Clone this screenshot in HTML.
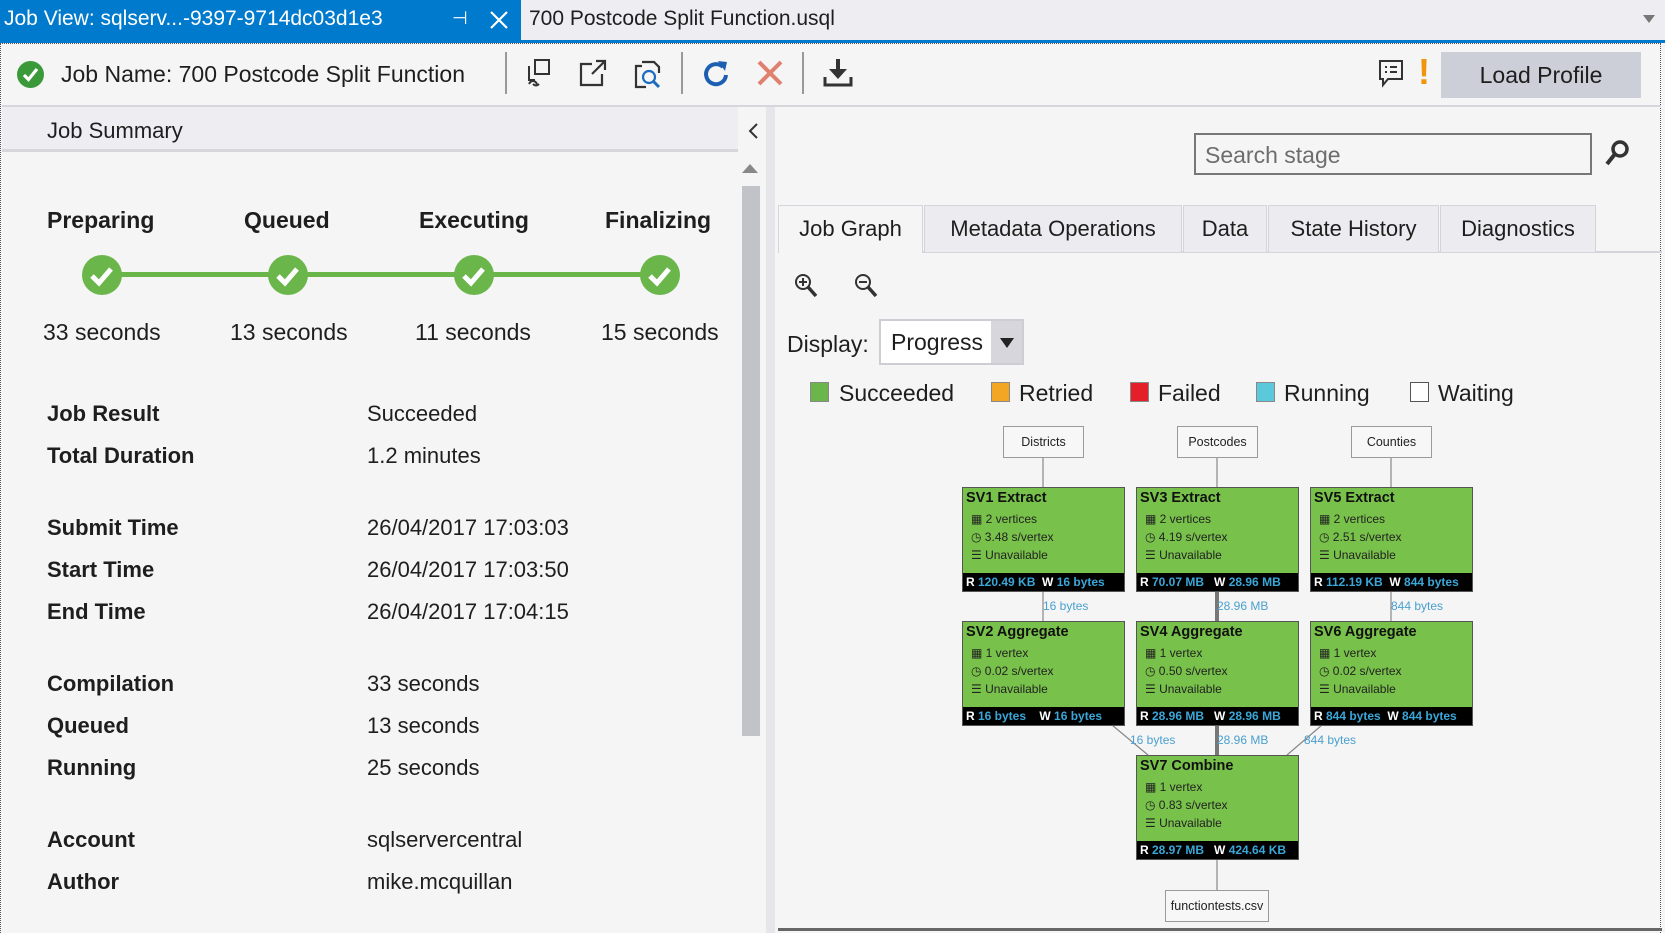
<!DOCTYPE html>
<html><head><meta charset="utf-8">
<style>
*{margin:0;padding:0;box-sizing:border-box}
body{width:1665px;height:933px;overflow:hidden;background:#f5f5f5;font-family:"Liberation Sans",sans-serif;color:#1e1e1e;position:relative}
.a{position:absolute;white-space:nowrap}
.lbl{font-weight:bold;font-size:22px}
.val{font-size:22px}
.st{position:absolute;width:163px;height:105px;background:#78c14a;border:1px solid #555}
.st .t{position:absolute;left:3px;top:2px;font-weight:bold;font-size:14.5px;color:#111}
.st .l{position:absolute;left:8px;font-size:12px;color:#222}
.st .f{position:absolute;left:0;right:0;bottom:0;height:18px;background:#000;color:#fff;font-size:12px;font-weight:bold;line-height:18px;padding-left:3px}
.st .f b{color:#3aa7d8}
.in{position:absolute;height:32px;border:1px solid #9a9a9a;background:#f7f7f7;font-size:12.5px;text-align:center;line-height:30px;color:#222}
.el{position:absolute;font-size:12px;color:#4aa0cf}
.tab{position:absolute;top:205px;height:47px;background:#ececf0;border:1px solid #d4d4da;border-bottom:none;font-size:22px;line-height:46px;text-align:center}
</style></head><body>
<!-- top tab bar -->
<div class="a" style="left:0;top:0;width:1665px;height:41px;background:#eeeef2"></div>
<div class="a" style="left:0;top:0;width:521px;height:41px;background:#007acc"></div>
<div class="a" style="left:4px;top:7px;font-size:21px;color:#fff">Job View: sqlserv...-9397-9714dc03d1e3</div>
<div class="a" style="left:452px;top:8px;font-size:18px;color:#fff">⊣</div>
<svg class="a" style="left:489px;top:10px" width="20" height="20"><path d="M2 2L18 18M18 2L2 18" stroke="#fff" stroke-width="2.2"/></svg>
<div class="a" style="left:529px;top:7px;font-size:21px;color:#1e1e1e">700 Postcode Split Function.usql</div>
<svg class="a" style="left:1643px;top:15px" width="12" height="8"><path d="M0 0H12L6 8Z" fill="#777"/></svg>
<div class="a" style="left:0;top:40px;width:1665px;height:3px;background:#007acc"></div>
<div class="a" style="left:0;top:43px;width:1661px;height:890px;border:1px dotted #555;border-bottom:none"></div>
<!-- toolbar -->
<svg class="a" style="left:16px;top:60px" width="29" height="29"><circle cx="14.5" cy="14.5" r="13.5" fill="#3a9a3a"/><path d="M8 15l4.5 4.5L21 9" stroke="#fff" stroke-width="3.2" fill="none"/></svg>
<div class="a" style="left:61px;top:61px;font-size:23px">Job Name: 700 Postcode Split Function</div>
<div class="a" style="left:505px;top:52px;width:2px;height:42px;background:#999"></div>
<div class="a" style="left:681px;top:52px;width:2px;height:42px;background:#999"></div>
<div class="a" style="left:802px;top:52px;width:2px;height:42px;background:#999"></div>
<svg class="a" style="left:525px;top:58px" width="30" height="30" fill="none" stroke="#333" stroke-width="2"><rect x="10" y="2" width="14" height="14"/><path d="M4 8v14h6"/><path d="M4 26c2-4 6-4 8 0M8 26c2 2 4 2 6 0"/></svg>
<svg class="a" style="left:578px;top:58px" width="30" height="30" fill="none" stroke="#333" stroke-width="2.2"><path d="M14 6H3v21h21V16"/><path d="M14 16L27 3M18 3h9v9"/></svg>
<svg class="a" style="left:633px;top:58px" width="32" height="32" fill="none" stroke-width="2.2"><path d="M9 8H3v21h10" stroke="#333"/><path d="M9 4h12l5 5v6" stroke="#333"/><circle cx="16" cy="19" r="6" stroke="#1c6bc0"/><path d="M20 23l6 6" stroke="#1c6bc0" stroke-width="3"/></svg>
<svg class="a" style="left:702px;top:58px" width="30" height="30" fill="none"><path d="M21 9a10 10 0 1 0 3 8" stroke="#1c5fb0" stroke-width="4"/><path d="M16 3l9 1-2 9z" fill="#1c5fb0"/></svg>
<svg class="a" style="left:756px;top:59px" width="28" height="28"><path d="M3 3L25 25M25 3L3 25" stroke="#e0806f" stroke-width="4"/></svg>
<svg class="a" style="left:823px;top:57px" width="30" height="30"><path d="M15 2v17" stroke="#333" stroke-width="4"/><path d="M6 12l9 10 9-10z" fill="#333"/><path d="M2 20v8h26v-8" stroke="#333" stroke-width="3" fill="none"/></svg>
<svg class="a" style="left:1376px;top:58px" width="30" height="32" fill="none" stroke="#333" stroke-width="2"><path d="M4 3h22v18H12l-5 6v-6H4z"/><path d="M9 9h2M14 9h7M9 14h2M14 14h7"/></svg>
<div class="a" style="left:1418px;top:51px;font-size:36px;font-weight:bold;color:#f0960a">!</div>
<div class="a" style="left:1441px;top:52px;width:200px;height:46px;background:#ccced8;font-size:23px;text-align:center;line-height:46px">Load Profile</div>
<div class="a" style="left:2px;top:105px;width:1659px;height:2px;background:#d6d6dc"></div>
<!-- left panel -->
<div class="a" style="left:2px;top:107px;width:736px;height:45px;background:#eeeef2;border-bottom:3px solid #d6d6dc"></div>
<div class="a" style="left:47px;top:118px;font-size:22px">Job Summary</div>
<svg class="a" style="left:747px;top:122px" width="12" height="18"><path d="M10 2L3 9l7 7" stroke="#333" stroke-width="2" fill="none"/></svg>
<svg class="a" style="left:742px;top:163px" width="16" height="10"><path d="M0 10L8 1l8 9z" fill="#888"/></svg>
<div class="a" style="left:742px;top:186px;width:18px;height:550px;background:#c2c3c9"></div>
<div class="a" style="left:766px;top:107px;width:9px;height:826px;background:#e6e6ea"></div>
<!-- stages -->
<div class="a" style="left:102px;top:272px;width:557px;height:5px;background:#6ab64a"></div>
<svg class="a" style="left:0;top:0;overflow:visible" width="1" height="1">
<g fill="#6ab64a"><circle cx="102" cy="275" r="20"/><circle cx="288" cy="275" r="20"/><circle cx="474" cy="275" r="20"/><circle cx="660" cy="275" r="20"/></g>
<g stroke="#fff" stroke-width="5" fill="none"><path d="M92 276l7 7 12-14"/><path d="M278 276l7 7 12-14"/><path d="M464 276l7 7 12-14"/><path d="M650 276l7 7 12-14"/></g>
</svg>
<div class="a lbl" style="left:47px;top:207px;font-size:23px">Preparing</div>
<div class="a lbl" style="left:244px;top:207px;font-size:23px">Queued</div>
<div class="a lbl" style="left:419px;top:207px;font-size:23px">Executing</div>
<div class="a lbl" style="left:605px;top:207px;font-size:23px">Finalizing</div>
<div class="a val" style="left:43px;top:319px;font-size:23px">33 seconds</div>
<div class="a val" style="left:230px;top:319px;font-size:23px">13 seconds</div>
<div class="a val" style="left:415px;top:319px;font-size:23px">11 seconds</div>
<div class="a val" style="left:601px;top:319px;font-size:23px">15 seconds</div>
<div class="a lbl" style="left:47px;top:401px">Job Result</div><div class="a val" style="left:367px;top:401px">Succeeded</div>
<div class="a lbl" style="left:47px;top:443px">Total Duration</div><div class="a val" style="left:367px;top:443px">1.2 minutes</div>
<div class="a lbl" style="left:47px;top:515px">Submit Time</div><div class="a val" style="left:367px;top:515px">26/04/2017 17:03:03</div>
<div class="a lbl" style="left:47px;top:557px">Start Time</div><div class="a val" style="left:367px;top:557px">26/04/2017 17:03:50</div>
<div class="a lbl" style="left:47px;top:599px">End Time</div><div class="a val" style="left:367px;top:599px">26/04/2017 17:04:15</div>
<div class="a lbl" style="left:47px;top:671px">Compilation</div><div class="a val" style="left:367px;top:671px">33 seconds</div>
<div class="a lbl" style="left:47px;top:713px">Queued</div><div class="a val" style="left:367px;top:713px">13 seconds</div>
<div class="a lbl" style="left:47px;top:755px">Running</div><div class="a val" style="left:367px;top:755px">25 seconds</div>
<div class="a lbl" style="left:47px;top:827px">Account</div><div class="a val" style="left:367px;top:827px">sqlservercentral</div>
<div class="a lbl" style="left:47px;top:869px">Author</div><div class="a val" style="left:367px;top:869px">mike.mcquillan</div>
<!-- right panel -->
<div class="a" style="left:1194px;top:133px;width:398px;height:42px;border:2px solid #777;background:#f5f5f5"></div>
<div class="a" style="left:1205px;top:142px;font-size:23px;color:#6d6d6d">Search stage</div>
<svg class="a" style="left:1604px;top:139px" width="26" height="28"><circle cx="16" cy="10" r="7" stroke="#333" stroke-width="3.5" fill="none"/><path d="M11 15L3 25" stroke="#333" stroke-width="4"/></svg>
<div class="a" style="left:778px;top:251px;width:884px;height:2px;background:#d4d4da"></div>
<div class="tab" style="left:778px;width:145px;background:#f5f5f5;height:48px">Job Graph</div>
<div class="tab" style="left:924px;width:258px">Metadata Operations</div>
<div class="tab" style="left:1183px;width:84px">Data</div>
<div class="tab" style="left:1268px;width:171px">State History</div>
<div class="tab" style="left:1440px;width:156px">Diagnostics</div>
<svg class="a" style="left:793px;top:272px" width="30" height="30" fill="none" stroke="#333" stroke-width="2"><circle cx="10" cy="10" r="7"/><path d="M10 6v8M6 10h8"/><path d="M15 15l8 9" stroke-width="3.5"/></svg>
<svg class="a" style="left:853px;top:272px" width="30" height="30" fill="none" stroke="#333" stroke-width="2"><circle cx="10" cy="10" r="7"/><path d="M6 10h8"/><path d="M15 15l8 9" stroke-width="3.5"/></svg>
<div class="a" style="left:787px;top:331px;font-size:23px">Display:</div>
<div class="a" style="left:879px;top:319px;width:145px;height:46px;border:2px solid #cdcdd3;background:#fff"></div>
<div class="a" style="left:991px;top:321px;width:31px;height:42px;background:#d6d6dc"></div>
<svg class="a" style="left:1000px;top:338px" width="14" height="10"><path d="M0 0H14L7 10z" fill="#222"/></svg>
<div class="a" style="left:891px;top:329px;font-size:23px">Progress</div>
<div class="a" style="left:810px;top:382px;width:19px;height:20px;background:#6ab64a;border:1px solid #888"></div>
<div class="a" style="left:839px;top:380px;font-size:23px">Succeeded</div>
<div class="a" style="left:991px;top:382px;width:19px;height:20px;background:#f2a623;border:1px solid #888"></div>
<div class="a" style="left:1019px;top:380px;font-size:23px">Retried</div>
<div class="a" style="left:1130px;top:382px;width:19px;height:20px;background:#e3202a;border:1px solid #888"></div>
<div class="a" style="left:1158px;top:380px;font-size:23px">Failed</div>
<div class="a" style="left:1256px;top:382px;width:19px;height:20px;background:#5bc8dc;border:1px solid #888"></div>
<div class="a" style="left:1284px;top:380px;font-size:23px">Running</div>
<div class="a" style="left:1410px;top:382px;width:19px;height:20px;background:#fff;border:1px solid #555"></div>
<div class="a" style="left:1438px;top:380px;font-size:23px">Waiting</div>
<!-- graph edges -->
<svg class="a" style="left:0;top:0;overflow:visible" width="1" height="1" stroke="#888" stroke-width="1.2">
<path d="M1043 458V487M1217 458V487M1391 458V487M1043 592V621M1391 592V621M1217 859V890"/>
<path d="M1217 592V621M1217 725V755" stroke="#777" stroke-width="4"/>
<path d="M1112 725L1148 755M1322 725L1287 755"/>
</svg>
<div class="el" style="left:1043px;top:599px">16 bytes</div>
<div class="el" style="left:1217px;top:599px">28.96 MB</div>
<div class="el" style="left:1391px;top:599px">844 bytes</div>
<div class="el" style="left:1130px;top:733px">16 bytes</div>
<div class="el" style="left:1217px;top:733px">28.96 MB</div>
<div class="el" style="left:1304px;top:733px">844 bytes</div>
<div class="in" style="left:1003px;top:426px;width:81px">Districts</div>
<div class="in" style="left:1177px;top:426px;width:81px">Postcodes</div>
<div class="in" style="left:1351px;top:426px;width:81px">Counties</div>
<div class="in" style="left:1165px;top:890px;width:104px">functiontests.csv</div>
<div class="a" style="left:778px;top:928px;width:884px;height:3px;background:#666"></div>

<div class="st" style="left:962px;top:487px"><div class="t">SV1 Extract</div><div class="l" style="top:24px">▦ 2 vertices</div><div class="l" style="top:42px">◷ 3.48 s/vertex</div><div class="l" style="top:60px">☰ Unavailable</div><div class="f">R <b>120.49 KB</b> &nbsp;W <b>16 bytes</b></div></div>
<div class="st" style="left:1136px;top:487px"><div class="t">SV3 Extract</div><div class="l" style="top:24px">▦ 2 vertices</div><div class="l" style="top:42px">◷ 4.19 s/vertex</div><div class="l" style="top:60px">☰ Unavailable</div><div class="f">R <b>70.07 MB</b> &nbsp;&nbsp;W <b>28.96 MB</b></div></div>
<div class="st" style="left:1310px;top:487px"><div class="t">SV5 Extract</div><div class="l" style="top:24px">▦ 2 vertices</div><div class="l" style="top:42px">◷ 2.51 s/vertex</div><div class="l" style="top:60px">☰ Unavailable</div><div class="f">R <b>112.19 KB</b> &nbsp;W <b>844 bytes</b></div></div>
<div class="st" style="left:962px;top:621px"><div class="t">SV2 Aggregate</div><div class="l" style="top:24px">▦ 1 vertex</div><div class="l" style="top:42px">◷ 0.02 s/vertex</div><div class="l" style="top:60px">☰ Unavailable</div><div class="f">R <b>16 bytes</b> &nbsp;&nbsp;&nbsp;W <b>16 bytes</b></div></div>
<div class="st" style="left:1136px;top:621px"><div class="t">SV4 Aggregate</div><div class="l" style="top:24px">▦ 1 vertex</div><div class="l" style="top:42px">◷ 0.50 s/vertex</div><div class="l" style="top:60px">☰ Unavailable</div><div class="f">R <b>28.96 MB</b> &nbsp;&nbsp;W <b>28.96 MB</b></div></div>
<div class="st" style="left:1310px;top:621px"><div class="t">SV6 Aggregate</div><div class="l" style="top:24px">▦ 1 vertex</div><div class="l" style="top:42px">◷ 0.02 s/vertex</div><div class="l" style="top:60px">☰ Unavailable</div><div class="f">R <b>844 bytes</b> &nbsp;W <b>844 bytes</b></div></div>
<div class="st" style="left:1136px;top:755px"><div class="t">SV7 Combine</div><div class="l" style="top:24px">▦ 1 vertex</div><div class="l" style="top:42px">◷ 0.83 s/vertex</div><div class="l" style="top:60px">☰ Unavailable</div><div class="f">R <b>28.97 MB</b> &nbsp;&nbsp;W <b>424.64 KB</b></div></div>
</body></html>
